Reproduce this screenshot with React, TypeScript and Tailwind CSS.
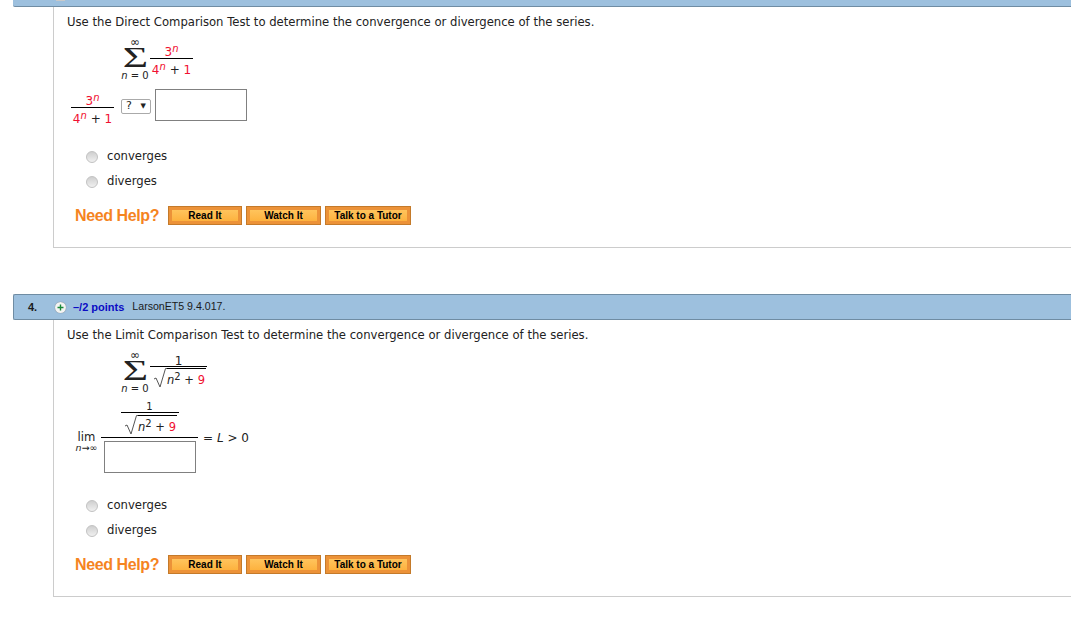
import React from "react";

const mathFont = "font-['DejaVu_Sans',sans-serif]";

const Var = ({ children }: { children: React.ReactNode }) => (
  <i className="italic">{children}</i>
);

const Red = ({ children }: { children: React.ReactNode }) => (
  <span className="text-[#f01030]">{children}</span>
);

const Sup = () => (
  <sup className="relative top-[-4px] align-baseline text-[10px] italic">n</sup>
);

const Two = () => (
  <sup className="relative top-[-4px] align-baseline text-[10px]">2</sup>
);

const Sigma = ({ children }: { children: React.ReactNode }) => (
  <div className="flex items-start">
    <div className="flex w-[30px] flex-col items-center text-[10px] leading-[10px] text-[#222]">
      <span className="h-[9px] text-[12px] leading-[9px]">∞</span>
      <span className="inline-block h-[24px] scale-x-150 font-['Liberation_Serif',serif] text-[29px] leading-[21px] font-light">
        Σ
      </span>
      <span className="whitespace-nowrap">
        <Var>n</Var> = 0
      </span>
    </div>
    {children}
  </div>
);

const Root = ({ children }: { children: React.ReactNode }) => (
  <div className="flex items-start">
    <svg width="16" height="20" viewBox="0 0 16 20" className="shrink-0">
      <path d="M3 11 L5 10 L9 19 L14.5 .5 L16 .5" fill="none" stroke="#555" strokeWidth="1" />
    </svg>
    <span className="border-t border-black pt-[3px] pr-[1px] text-[11.5px] leading-[17px] whitespace-nowrap">
      {children}
    </span>
  </div>
);

const PowerFraction = ({ className }: { className: string }) => (
  <div className={`flex w-[43px] flex-col items-center ${className}`}>
    <span className="flex h-[15px] items-end text-[12px] leading-[11px] text-[#f01030]">
      <span>
        3<Sup />
      </span>
    </span>
    <div className="h-px w-full bg-black" />
    <span className="pt-[4px] text-[12px] leading-[15px] whitespace-nowrap">
      <Red>
        4<Sup />
      </Red>{" "}
      + <Red>1</Red>
    </span>
  </div>
);

const Choice = ({ label }: { label: string }) => (
  <label className="flex h-[25px] items-center">
    <input
      type="radio"
      name="choice"
      className="h-[12px] w-[12px] appearance-none rounded-full border border-[#c2c2c2] bg-linear-to-b from-[#cfcfcf] to-[#f0f0f0]"
    />
    <span className="ml-[9px] text-[#222]">{label}</span>
  </label>
);

const HelpButton = ({ label, width }: { label: string; width: string }) => (
  <button
    className={`flex h-[19px] items-stretch border border-[#c47a2a] bg-[#ec9238] p-[3px] ${width}`}
  >
    <span className="flex flex-1 items-center justify-center bg-linear-to-b from-[#ffc45c] to-[#fdb23e] font-['Liberation_Sans',sans-serif] text-[10px] font-bold text-black">
      {label}
    </span>
  </button>
);

const Help = () => (
  <div className="mt-[12px] ml-[8px] flex items-center">
    <span className="w-[93px] font-['Liberation_Sans',sans-serif] text-[16px] leading-[19px] font-bold tracking-[-0.4px] text-[#f5841f]">
      Need Help?
    </span>
    <div className="flex gap-[4px]">
      <HelpButton label="Read It" width="w-[74px]" />
      <HelpButton label="Watch It" width="w-[75px]" />
      <HelpButton label="Talk to a Tutor" width="w-[86px]" />
    </div>
  </div>
);

const Choices = ({ className }: { className: string }) => (
  <div className={`ml-[19px] flex flex-col ${className}`}>
    <Choice label="converges" />
    <Choice label="diverges" />
  </div>
);

const Header = () => (
  <div className="mt-[46px] ml-[13px] flex h-[26px] items-center rounded-l-[2px] border border-r-0 border-[#6f8ca3] bg-[#9dc0de] font-['Liberation_Sans',sans-serif] text-[#1a1a1a]">
    <b className="ml-[14px] w-[27px] text-[11px]">4.</b>
    <span className="flex h-[11px] w-[11px] items-center justify-center rounded-full bg-[#f4f4f4] shadow-[0_0_1px_#666]">
      <svg width="7" height="7" viewBox="0 0 7 7">
        <path d="M3.5 .5 V6.5 M.5 3.5 H6.5" stroke="#1a8a3a" strokeWidth="1.4" fill="none" />
      </svg>
    </span>
    <b className="ml-[7px] text-[11px] text-[#0b0bc4]">–/2 points</b>
    <span className="ml-[8px] text-[10.6px]">LarsonET5 9.4.017.</span>
  </div>
);

export default function App() {
  return (
    <div className={`h-[621px] w-[1071px] overflow-hidden bg-white text-[11.65px] text-[#222] ${mathFont}`}>
      {/* question 3, header cut off at the top of the page */}
      <div className="ml-[13px] h-[7px] rounded-bl-[2px] border-b border-[#6f8ca3] bg-[#9dc0de]">
        <div className="ml-[43px] h-px w-[9px] bg-[#c9c9c9]" />
      </div>
      <div className="ml-[53px] h-[241px] border-b border-l border-[#cccccc] pt-[8px] pl-[13px]">
        <p className="leading-[14px]">
          Use the Direct Comparison Test to determine the convergence or divergence of the series.
        </p>
        <div className="mt-[9px] ml-[53px]">
          <Sigma>
            <PowerFraction className="mt-[5px]" />
          </Sigma>
        </div>
        <div className="mt-[8px] ml-[4px] flex items-start">
          <PowerFraction className="mt-[3px]" />
          <div className="mt-[10px] ml-[7px] flex h-[15px] w-[30px] items-center justify-between rounded-[2px] border border-[#aaa] px-[4px] text-[11px]">
            ? <span className="text-[7px]">▼</span>
          </div>
          <div className="ml-[4px] h-[32px] w-[92px] border border-[#808080]" />
        </div>
        <Choices className="mt-[17px]" />
        <Help />
      </div>

      <Header />
      <div className="ml-[53px] h-[277px] border-b border-l border-[#cccccc] pt-[8px] pl-[13px]">
        <p className="leading-[14px]">
          Use the Limit Comparison Test to determine the convergence or divergence of the series.
        </p>
        <div className="mt-[9px] ml-[53px]">
          <Sigma>
            <div className="flex w-[57px] flex-col items-center">
              <span className="h-[15px] text-[12px] leading-[20px]">1</span>
              <div className="mb-[1px] h-px w-full bg-black" />
              <Root>
                <Var>n</Var>
                <Two /> + <Red>9</Red>
              </Root>
            </div>
          </Sigma>
        </div>
        <div className="mt-[6px] ml-[7px] flex items-start">
          <div className="mt-[30px] flex w-[27px] flex-col items-center pr-[2px]">
            <span className="leading-[14px]">lim</span>
            <span className="text-[9.5px] leading-[8px] whitespace-nowrap italic">n→∞</span>
          </div>
          <div className="flex w-[97px] flex-col">
            <div className="flex h-[37px] flex-col items-center">
              <span className="h-[12px] text-[10px] leading-[14px]">1</span>
              <div className="mb-[2px] h-px w-[58px] bg-black" />
              <Root>
                <Var>n</Var>
                <Two /> + <Red>9</Red>
              </Root>
            </div>
            <div className="h-px w-full bg-black" />
            <div className="mt-[3px] ml-[3px] h-[32px] w-[92px] border border-[#808080]" />
          </div>
          <span className="mt-[31px] ml-[5px] text-[12px] leading-[14px] whitespace-nowrap">
            = <Var>L</Var> &gt; 0
          </span>
        </div>
        <Choices className="mt-[20px]" />
        <Help />
      </div>
    </div>
  );
}
